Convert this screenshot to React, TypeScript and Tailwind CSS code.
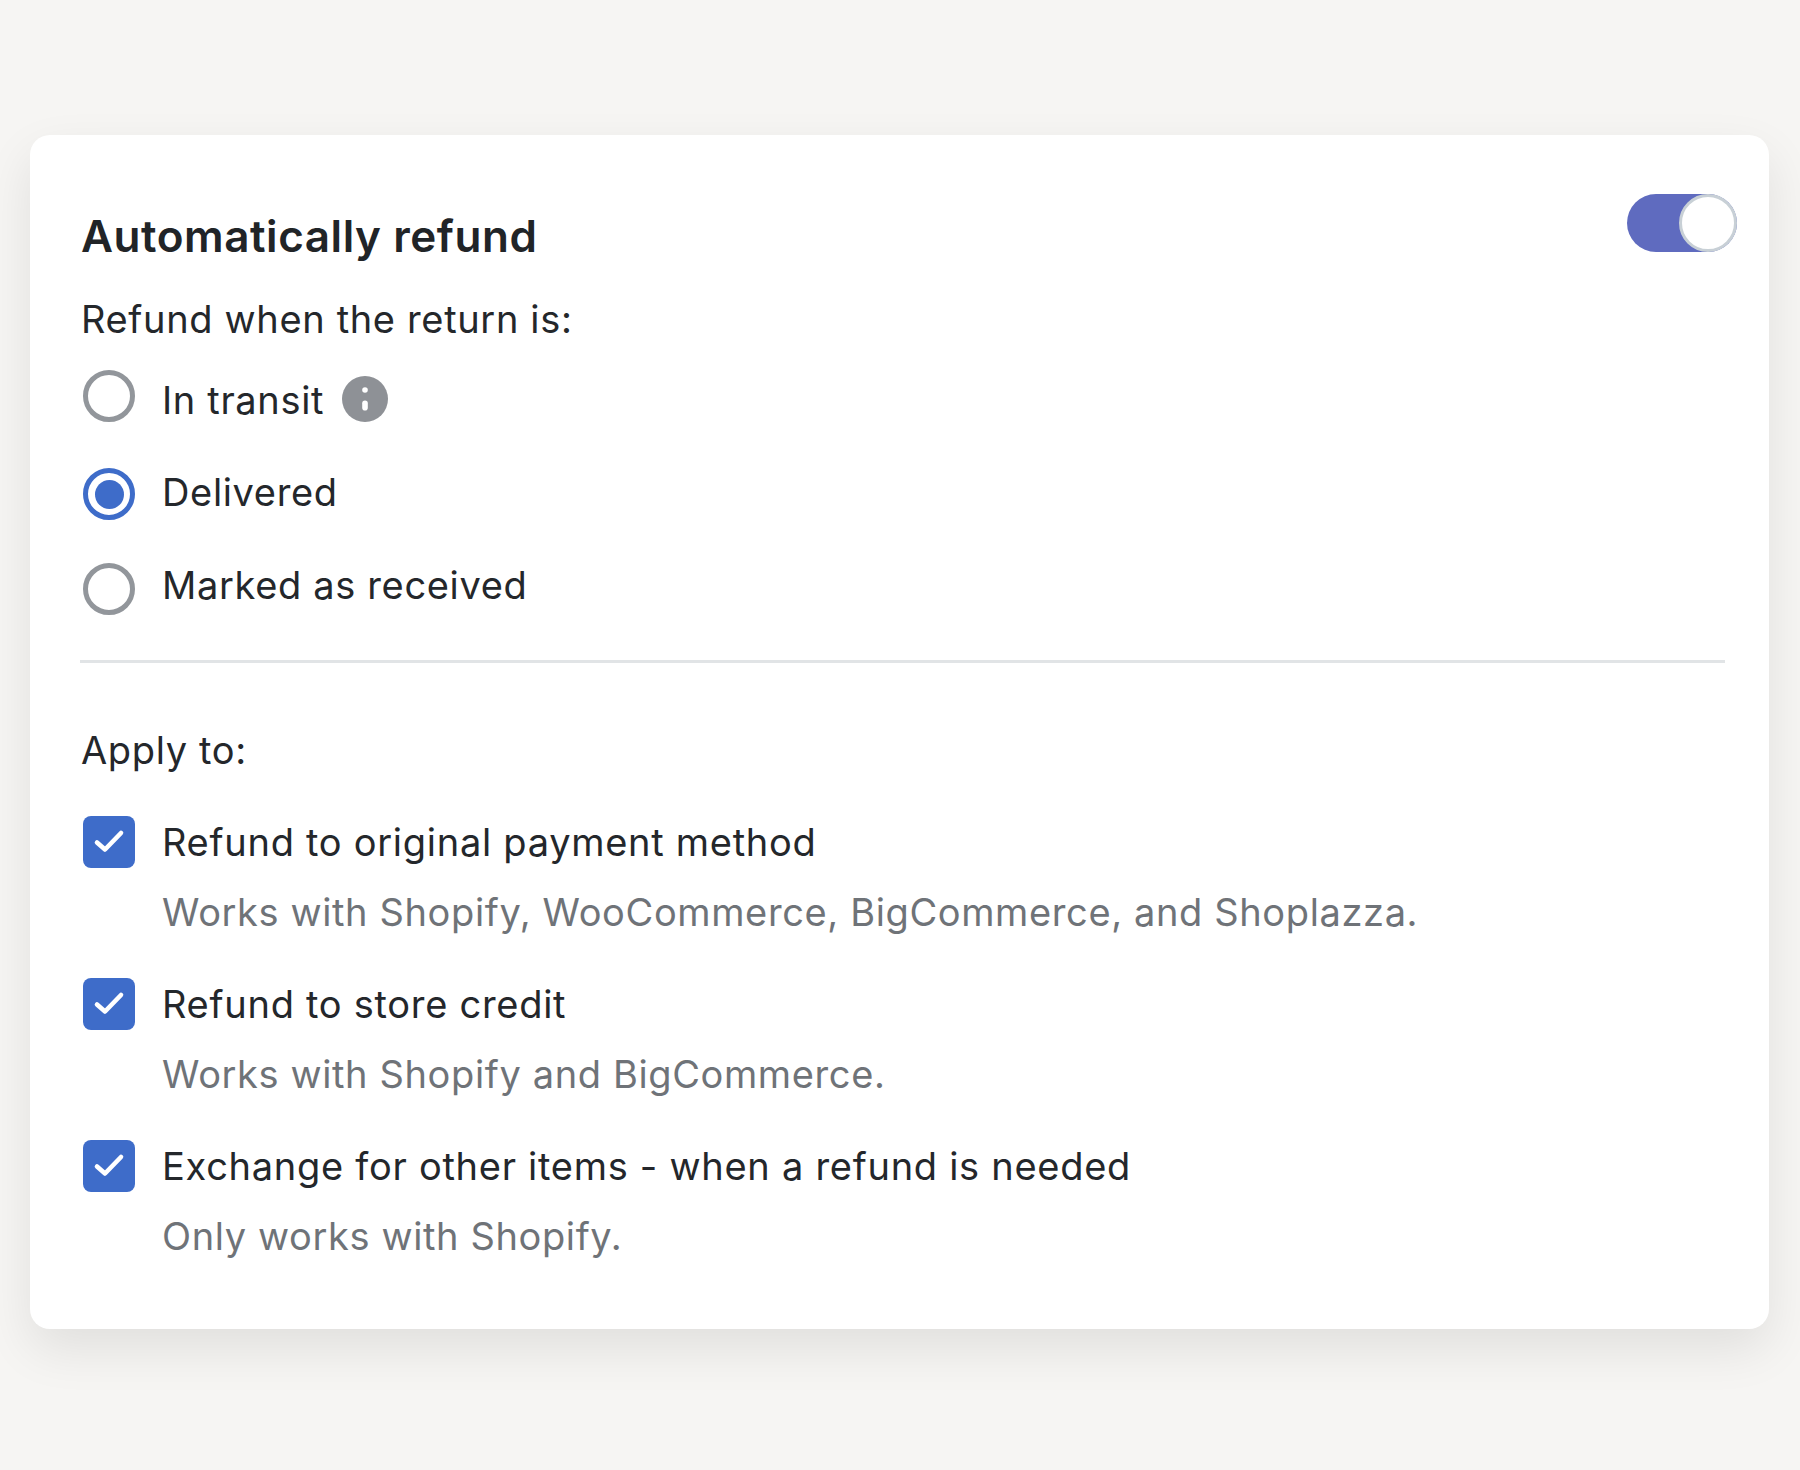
const font = { fontFamily: "Inter, sans-serif" };

function Radio({ checked, className = "" }: { checked?: boolean; className?: string }) {
  if (checked) {
    return (
      <span className={`flex h-[52px] w-[52px] shrink-0 items-center justify-center rounded-full border-[5px] border-[#3e6cc9] bg-white ${className}`}>
        <span className="h-[29px] w-[29px] rounded-full bg-[#3e6cc9]" />
      </span>
    );
  }
  return <span className={`h-[52px] w-[52px] shrink-0 rounded-full border-[5px] border-[#92969b] bg-white ${className}`} />;
}

function Checkbox() {
  return (
    <span className="h-[52px] w-[52px] shrink-0 rounded-[8px] bg-[#3e6cc9]">
      <svg width="52" height="52" viewBox="0 0 52 52" fill="none">
        <path d="M14 26.5 L22 33.5 L38 17" stroke="white" strokeWidth="4.6" strokeLinecap="round" strokeLinejoin="round" />
      </svg>
    </span>
  );
}

function InfoIcon() {
  return (
    <svg width="46" height="46" viewBox="0 0 46 46" className="mb-[2px] ml-[18px] shrink-0">
      <circle cx="23" cy="23" r="23" fill="#8e9196" />
      <circle cx="23" cy="14" r="2.8" fill="white" />
      <rect x="20.2" y="24.5" width="5.6" height="10" rx="2.8" fill="white" />
    </svg>
  );
}

const applyOptions = [
  { title: "Refund to original payment method", note: "Works with Shopify, WooCommerce, BigCommerce, and Shoplazza." },
  { title: "Refund to store credit", note: "Works with Shopify and BigCommerce." },
  { title: "Exchange for other items - when a refund is needed", note: "Only works with Shopify." },
];

export default function App() {
  return (
    <div className="h-[1470px] w-full bg-[#f6f5f3] px-[30px] pt-[135px] text-[#24272b]" style={font}>
      <div className="h-[1194px] w-[1739px] rounded-[20px] bg-white pl-[51px] pr-[32px] pt-[59px] shadow-[0_20px_50px_rgba(0,0,0,0.09)]">
        <div className="flex items-start justify-between">
          <h1 className="mt-[14px] text-[44px] font-semibold leading-[56px] tracking-[0.55px] text-[#212427]">Automatically refund</h1>
          <div className="flex h-[58px] w-[110px] justify-end rounded-full bg-[#5f6bbf]">
            <span className="h-[58px] w-[58px] rounded-full border-[3px] border-[#c8d0d6] bg-white" />
          </div>
        </div>

        <p className="mt-[30px] text-[38px] leading-[50px] tracking-[0.65px]">Refund when the return is:</p>

        <div className="mt-[25px] flex h-[62px] items-center pl-[2px]">
          <Radio className="mb-[9px]" />
          <span className="ml-[27px] text-[38px] leading-[50px] tracking-[0.65px]">In transit</span>
          <InfoIcon />
        </div>
        <div className="mt-[30px] flex h-[62px] items-center pl-[2px]">
          <Radio checked className="mt-[4px]" />
          <span className="ml-[27px] text-[38px] leading-[50px] tracking-[0.65px]">Delivered</span>
        </div>
        <div className="mt-[31px] flex h-[62px] items-center pl-[2px]">
          <Radio className="mt-[7px]" />
          <span className="ml-[27px] text-[38px] leading-[50px] tracking-[0.65px]">Marked as received</span>
        </div>

        <div className="ml-[-1px] mr-[12px] mt-[44px] border-t-[3px] border-[#e1e4e6]" />

        <p className="mt-[62px] text-[38px] leading-[50px] tracking-[0.65px]">Apply to:</p>

        <div className="mt-[41px] flex flex-col gap-[41px] pl-[2px]">
          {applyOptions.map((opt) => (
            <div key={opt.title} className="flex items-start gap-[27px]">
              <Checkbox />
              <div>
                <div className="text-[38px] leading-[52px] tracking-[0.72px]">{opt.title}</div>
                <div className="mt-[19px] text-[38px] leading-[50px] tracking-[0.62px] text-[#6f7378]">{opt.note}</div>
              </div>
            </div>
          ))}
        </div>
      </div>
    </div>
  );
}
